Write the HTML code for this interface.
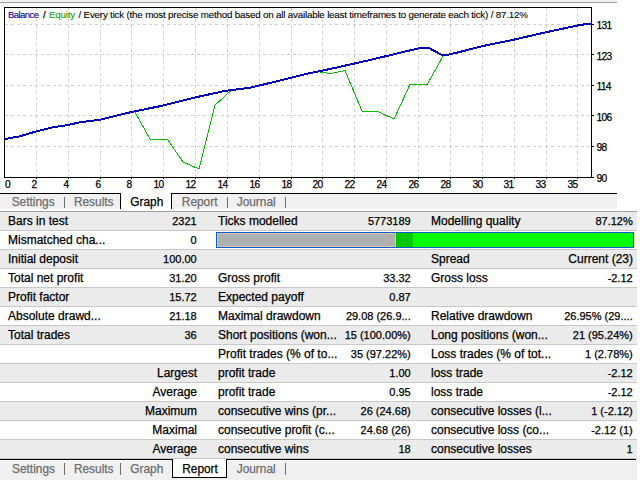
<!DOCTYPE html>
<html><head><meta charset="utf-8"><style>
html,body{margin:0;padding:0;}
body{width:640px;height:480px;position:relative;overflow:hidden;background:#fff;font-family:"Liberation Sans", sans-serif;}
div{position:absolute;}
.t{position:absolute;white-space:nowrap;line-height:1;font-family:"Liberation Sans", sans-serif;-webkit-text-stroke:0.25px currentColor;}
</style></head><body>
<div style="left:0px;top:0px;width:617px;height:2px;background:#f0f0f0;"></div>
<div style="left:0px;top:2px;width:617px;height:1px;background:#a0a0a0;"></div>
<svg width="640" height="200" style="position:absolute;left:0;top:0" shape-rendering="crispEdges"><line x1="36.5" y1="7" x2="36.5" y2="177" stroke="#d0d0d0" stroke-dasharray="3 3"/><line x1="36.5" y1="177" x2="36.5" y2="178.6" stroke="#000"/><line x1="68.5" y1="7" x2="68.5" y2="177" stroke="#d0d0d0" stroke-dasharray="3 3"/><line x1="68.5" y1="177" x2="68.5" y2="178.6" stroke="#000"/><line x1="100.5" y1="7" x2="100.5" y2="177" stroke="#d0d0d0" stroke-dasharray="3 3"/><line x1="100.5" y1="177" x2="100.5" y2="178.6" stroke="#000"/><line x1="131.5" y1="7" x2="131.5" y2="177" stroke="#d0d0d0" stroke-dasharray="3 3"/><line x1="131.5" y1="177" x2="131.5" y2="178.6" stroke="#000"/><line x1="163.5" y1="7" x2="163.5" y2="177" stroke="#d0d0d0" stroke-dasharray="3 3"/><line x1="163.5" y1="177" x2="163.5" y2="178.6" stroke="#000"/><line x1="195.5" y1="7" x2="195.5" y2="177" stroke="#d0d0d0" stroke-dasharray="3 3"/><line x1="195.5" y1="177" x2="195.5" y2="178.6" stroke="#000"/><line x1="227.5" y1="7" x2="227.5" y2="177" stroke="#d0d0d0" stroke-dasharray="3 3"/><line x1="227.5" y1="177" x2="227.5" y2="178.6" stroke="#000"/><line x1="259.5" y1="7" x2="259.5" y2="177" stroke="#d0d0d0" stroke-dasharray="3 3"/><line x1="259.5" y1="177" x2="259.5" y2="178.6" stroke="#000"/><line x1="291.5" y1="7" x2="291.5" y2="177" stroke="#d0d0d0" stroke-dasharray="3 3"/><line x1="291.5" y1="177" x2="291.5" y2="178.6" stroke="#000"/><line x1="322.5" y1="7" x2="322.5" y2="177" stroke="#d0d0d0" stroke-dasharray="3 3"/><line x1="322.5" y1="177" x2="322.5" y2="178.6" stroke="#000"/><line x1="354.5" y1="7" x2="354.5" y2="177" stroke="#d0d0d0" stroke-dasharray="3 3"/><line x1="354.5" y1="177" x2="354.5" y2="178.6" stroke="#000"/><line x1="386.5" y1="7" x2="386.5" y2="177" stroke="#d0d0d0" stroke-dasharray="3 3"/><line x1="386.5" y1="177" x2="386.5" y2="178.6" stroke="#000"/><line x1="418.5" y1="7" x2="418.5" y2="177" stroke="#d0d0d0" stroke-dasharray="3 3"/><line x1="418.5" y1="177" x2="418.5" y2="178.6" stroke="#000"/><line x1="450.5" y1="7" x2="450.5" y2="177" stroke="#d0d0d0" stroke-dasharray="3 3"/><line x1="450.5" y1="177" x2="450.5" y2="178.6" stroke="#000"/><line x1="482.5" y1="7" x2="482.5" y2="177" stroke="#d0d0d0" stroke-dasharray="3 3"/><line x1="482.5" y1="177" x2="482.5" y2="178.6" stroke="#000"/><line x1="514.5" y1="7" x2="514.5" y2="177" stroke="#d0d0d0" stroke-dasharray="3 3"/><line x1="514.5" y1="177" x2="514.5" y2="178.6" stroke="#000"/><line x1="546.5" y1="7" x2="546.5" y2="177" stroke="#d0d0d0" stroke-dasharray="3 3"/><line x1="546.5" y1="177" x2="546.5" y2="178.6" stroke="#000"/><line x1="577.5" y1="7" x2="577.5" y2="177" stroke="#d0d0d0" stroke-dasharray="3 3"/><line x1="577.5" y1="177" x2="577.5" y2="178.6" stroke="#000"/><line x1="5" y1="24.5" x2="591" y2="24.5" stroke="#d0d0d0" stroke-dasharray="3 3"/><line x1="591" y1="24.5" x2="594" y2="24.5" stroke="#000"/><line x1="5" y1="54.5" x2="591" y2="54.5" stroke="#d0d0d0" stroke-dasharray="3 3"/><line x1="591" y1="54.5" x2="594" y2="54.5" stroke="#000"/><line x1="5" y1="85.5" x2="591" y2="85.5" stroke="#d0d0d0" stroke-dasharray="3 3"/><line x1="591" y1="85.5" x2="594" y2="85.5" stroke="#000"/><line x1="5" y1="115.5" x2="591" y2="115.5" stroke="#d0d0d0" stroke-dasharray="3 3"/><line x1="591" y1="115.5" x2="594" y2="115.5" stroke="#000"/><line x1="5" y1="146.5" x2="591" y2="146.5" stroke="#d0d0d0" stroke-dasharray="3 3"/><line x1="591" y1="146.5" x2="594" y2="146.5" stroke="#000"/><line x1="591" y1="177.5" x2="594" y2="177.5" stroke="#000"/><rect x="4.5" y="7.5" width="587" height="170" fill="none" stroke="#000"/><polyline fill="none" stroke="#00c000" stroke-width="1" points="135,112 150,139 168,140 183,162 199,169 215,105 224,97 231,90.5"/><polyline fill="none" stroke="#00c000" stroke-width="1" points="320,72 331,73.5 345,70.5 362,111 379,112 394,119 410,84.5 427,85 443,56"/><polyline fill="none" stroke="#0000b8" stroke-width="2" points="5,139 20,136.25 36,131.5 52,127.5 68,125 80,122.25 100,119.7 120,114.75 135,111.25 163,105.6 195,97.5 225,90.9 232,90 250,87.75 290,78.1 310,73.1 330,69 370,60 422,47.5 428,47.5 442,55 447,55 460,51.9 482,46.25 515,39.4 545,32.5 577,25.6 588,23.75 591,23.75"/></svg>
<span class="t" style="left:8px;top:10.3px;font-size:9.5px;color:#0000a0;letter-spacing:-0.55px;-webkit-text-stroke:0.1px currentColor;">Balance</span>
<span class="t" style="left:43px;top:10px;font-size:9.8px;color:#000;">/</span>
<span class="t" style="left:49px;top:10px;font-size:9.8px;color:#10a010;letter-spacing:-0.2px;-webkit-text-stroke:0.1px currentColor;">Equity</span>
<span class="t" style="left:78.5px;top:10px;font-size:9.8px;color:#000;letter-spacing:-0.2px;-webkit-text-stroke:0.1px currentColor;">/ Every tick (the most precise method based on all available least timeframes to generate each tick) / 87.12%</span>
<span class="t" style="left:596.5px;top:21.1px;font-size:10.2px;color:#000;letter-spacing:-0.7px;">131</span>
<span class="t" style="left:596.5px;top:51.6px;font-size:10.2px;color:#000;letter-spacing:-0.7px;">123</span>
<span class="t" style="left:596.5px;top:82.1px;font-size:10.2px;color:#000;letter-spacing:-0.7px;">114</span>
<span class="t" style="left:596.5px;top:112.6px;font-size:10.2px;color:#000;letter-spacing:-0.7px;">106</span>
<span class="t" style="left:596.5px;top:143.1px;font-size:10.2px;color:#000;letter-spacing:-0.7px;">98</span>
<span class="t" style="left:596.5px;top:174.1px;font-size:10.2px;color:#000;letter-spacing:-0.7px;">90</span>
<span class="t" style="left:5px;top:179.6px;font-size:10.2px;color:#000;letter-spacing:-0.7px;">0</span>
<span class="t" style="right:603.5px;top:179.6px;font-size:10.2px;color:#000;letter-spacing:-0.7px;">2</span>
<span class="t" style="right:571.5px;top:179.6px;font-size:10.2px;color:#000;letter-spacing:-0.7px;">4</span>
<span class="t" style="right:539.5px;top:179.6px;font-size:10.2px;color:#000;letter-spacing:-0.7px;">6</span>
<span class="t" style="right:508.5px;top:179.6px;font-size:10.2px;color:#000;letter-spacing:-0.7px;">8</span>
<span class="t" style="right:476.5px;top:179.6px;font-size:10.2px;color:#000;letter-spacing:-0.7px;">10</span>
<span class="t" style="right:444.5px;top:179.6px;font-size:10.2px;color:#000;letter-spacing:-0.7px;">12</span>
<span class="t" style="right:412.5px;top:179.6px;font-size:10.2px;color:#000;letter-spacing:-0.7px;">14</span>
<span class="t" style="right:380.5px;top:179.6px;font-size:10.2px;color:#000;letter-spacing:-0.7px;">16</span>
<span class="t" style="right:348.5px;top:179.6px;font-size:10.2px;color:#000;letter-spacing:-0.7px;">18</span>
<span class="t" style="right:317.5px;top:179.6px;font-size:10.2px;color:#000;letter-spacing:-0.7px;">20</span>
<span class="t" style="right:285.5px;top:179.6px;font-size:10.2px;color:#000;letter-spacing:-0.7px;">22</span>
<span class="t" style="right:253.5px;top:179.6px;font-size:10.2px;color:#000;letter-spacing:-0.7px;">24</span>
<span class="t" style="right:221.5px;top:179.6px;font-size:10.2px;color:#000;letter-spacing:-0.7px;">26</span>
<span class="t" style="right:189.5px;top:179.6px;font-size:10.2px;color:#000;letter-spacing:-0.7px;">28</span>
<span class="t" style="right:157.5px;top:179.6px;font-size:10.2px;color:#000;letter-spacing:-0.7px;">30</span>
<span class="t" style="right:126.5px;top:179.6px;font-size:10.2px;color:#000;letter-spacing:-0.7px;">31</span>
<span class="t" style="right:94.5px;top:179.6px;font-size:10.2px;color:#000;letter-spacing:-0.7px;">33</span>
<span class="t" style="right:62.5px;top:179.6px;font-size:10.2px;color:#000;letter-spacing:-0.7px;">35</span>
<div style="left:0px;top:193px;width:617px;height:1px;background:#000;"></div>
<div style="left:0px;top:194px;width:617px;height:15px;background:#f0f0f0;"></div>
<div style="left:0px;top:209px;width:637px;height:2px;background:#ffffff;"></div>
<div style="left:0px;top:211px;width:637px;height:1px;background:#a0a0a0;"></div>
<div style="left:120px;top:193px;width:52px;height:16px;background:#fff;border-left:1px solid #000;border-right:1px solid #000;box-sizing:border-box;"></div>
<span class="t" style="left:11.7px;top:196.5px;font-size:11.9px;color:#6d6d6d;">Settings</span>
<span class="t" style="left:73.9px;top:196.5px;font-size:11.9px;color:#6d6d6d;">Results</span>
<span class="t" style="left:130.3px;top:196.5px;font-size:11.9px;color:#000;">Graph</span>
<span class="t" style="left:181.8px;top:196.5px;font-size:11.9px;color:#6d6d6d;">Report</span>
<span class="t" style="left:236.7px;top:196.5px;font-size:11.9px;color:#6d6d6d;">Journal</span>
<div style="left:64px;top:197px;width:1px;height:11px;background:#6d6d6d;"></div>
<div style="left:227px;top:197px;width:1px;height:11px;background:#6d6d6d;"></div>
<div style="left:285px;top:197px;width:1px;height:11px;background:#6d6d6d;"></div>
<div style="left:0px;top:212px;width:637px;height:18px;background:#ebebeb;"></div>
<div style="left:0px;top:230px;width:637px;height:1px;background:#c8c8c8;"></div>
<span class="t" style="left:8px;top:215px;font-size:12px;color:#000;">Bars in test</span>
<span class="t" style="right:443.3px;top:216px;font-size:11px;color:#000;">2321</span>
<span class="t" style="left:218px;top:215px;font-size:12px;color:#000;">Ticks modelled</span>
<span class="t" style="right:229.3px;top:216px;font-size:11px;color:#000;">5773189</span>
<span class="t" style="left:431px;top:215px;font-size:12px;color:#000;">Modelling quality</span>
<span class="t" style="right:7.2999999999999545px;top:216px;font-size:11px;color:#000;">87.12%</span>
<div style="left:0px;top:231px;width:637px;height:18px;background:#fff;"></div>
<div style="left:0px;top:249px;width:637px;height:1px;background:#c8c8c8;"></div>
<span class="t" style="left:8px;top:234px;font-size:12px;color:#000;">Mismatched cha...</span>
<span class="t" style="right:443.3px;top:235px;font-size:11px;color:#000;">0</span>
<div style="left:0px;top:250px;width:637px;height:18px;background:#ebebeb;"></div>
<div style="left:0px;top:268px;width:637px;height:1px;background:#c8c8c8;"></div>
<span class="t" style="left:8px;top:253px;font-size:12px;color:#000;">Initial deposit</span>
<span class="t" style="right:443.3px;top:254px;font-size:11px;color:#000;">100.00</span>
<span class="t" style="left:431px;top:253px;font-size:12px;color:#000;">Spread</span>
<span class="t" style="right:7px;top:253px;font-size:12px;color:#000;">Current (23)</span>
<div style="left:0px;top:269px;width:637px;height:18px;background:#fff;"></div>
<div style="left:0px;top:287px;width:637px;height:1px;background:#c8c8c8;"></div>
<span class="t" style="left:8px;top:272px;font-size:12px;color:#000;">Total net profit</span>
<span class="t" style="right:443.3px;top:273px;font-size:11px;color:#000;">31.20</span>
<span class="t" style="left:218px;top:272px;font-size:12px;color:#000;">Gross profit</span>
<span class="t" style="right:229.3px;top:273px;font-size:11px;color:#000;">33.32</span>
<span class="t" style="left:431px;top:272px;font-size:12px;color:#000;">Gross loss</span>
<span class="t" style="right:7.2999999999999545px;top:273px;font-size:11px;color:#000;">-2.12</span>
<div style="left:0px;top:288px;width:637px;height:18px;background:#ebebeb;"></div>
<div style="left:0px;top:306px;width:637px;height:1px;background:#c8c8c8;"></div>
<span class="t" style="left:8px;top:291px;font-size:12px;color:#000;">Profit factor</span>
<span class="t" style="right:443.3px;top:292px;font-size:11px;color:#000;">15.72</span>
<span class="t" style="left:218px;top:291px;font-size:12px;color:#000;">Expected payoff</span>
<span class="t" style="right:229.3px;top:292px;font-size:11px;color:#000;">0.87</span>
<div style="left:0px;top:307px;width:637px;height:18px;background:#fff;"></div>
<div style="left:0px;top:325px;width:637px;height:1px;background:#c8c8c8;"></div>
<span class="t" style="left:8px;top:310px;font-size:12px;color:#000;">Absolute drawd...</span>
<span class="t" style="right:443.3px;top:311px;font-size:11px;color:#000;">21.18</span>
<span class="t" style="left:218px;top:310px;font-size:12px;color:#000;">Maximal drawdown</span>
<span class="t" style="right:229.3px;top:311px;font-size:11px;color:#000;">29.08 (26.9...</span>
<span class="t" style="left:431px;top:310px;font-size:12px;color:#000;">Relative drawdown</span>
<span class="t" style="right:7.2999999999999545px;top:311px;font-size:11px;color:#000;">26.95% (29....</span>
<div style="left:0px;top:326px;width:637px;height:18px;background:#ebebeb;"></div>
<div style="left:0px;top:344px;width:637px;height:1px;background:#c8c8c8;"></div>
<span class="t" style="left:8px;top:329px;font-size:12px;color:#000;">Total trades</span>
<span class="t" style="right:443.3px;top:330px;font-size:11px;color:#000;">36</span>
<span class="t" style="left:218px;top:329px;font-size:12px;color:#000;">Short positions (won...</span>
<span class="t" style="right:229.3px;top:330px;font-size:11px;color:#000;">15 (100.00%)</span>
<span class="t" style="left:431px;top:329px;font-size:12px;color:#000;">Long positions (won...</span>
<span class="t" style="right:7.2999999999999545px;top:330px;font-size:11px;color:#000;">21 (95.24%)</span>
<div style="left:0px;top:345px;width:637px;height:18px;background:#fff;"></div>
<div style="left:0px;top:363px;width:637px;height:1px;background:#c8c8c8;"></div>
<span class="t" style="left:218px;top:348px;font-size:12px;color:#000;">Profit trades (% of to...</span>
<span class="t" style="right:229.3px;top:349px;font-size:11px;color:#000;">35 (97.22%)</span>
<span class="t" style="left:431px;top:348px;font-size:12px;color:#000;">Loss trades (% of tot...</span>
<span class="t" style="right:7.2999999999999545px;top:349px;font-size:11px;color:#000;">1 (2.78%)</span>
<div style="left:0px;top:364px;width:637px;height:18px;background:#ebebeb;"></div>
<div style="left:0px;top:382px;width:637px;height:1px;background:#c8c8c8;"></div>
<span class="t" style="right:443px;top:367px;font-size:12px;color:#000;">Largest</span>
<span class="t" style="left:218px;top:367px;font-size:12px;color:#000;">profit trade</span>
<span class="t" style="right:229.3px;top:368px;font-size:11px;color:#000;">1.00</span>
<span class="t" style="left:431px;top:367px;font-size:12px;color:#000;">loss trade</span>
<span class="t" style="right:7.2999999999999545px;top:368px;font-size:11px;color:#000;">-2.12</span>
<div style="left:0px;top:383px;width:637px;height:18px;background:#fff;"></div>
<div style="left:0px;top:401px;width:637px;height:1px;background:#c8c8c8;"></div>
<span class="t" style="right:443px;top:386px;font-size:12px;color:#000;">Average</span>
<span class="t" style="left:218px;top:386px;font-size:12px;color:#000;">profit trade</span>
<span class="t" style="right:229.3px;top:387px;font-size:11px;color:#000;">0.95</span>
<span class="t" style="left:431px;top:386px;font-size:12px;color:#000;">loss trade</span>
<span class="t" style="right:7.2999999999999545px;top:387px;font-size:11px;color:#000;">-2.12</span>
<div style="left:0px;top:402px;width:637px;height:18px;background:#ebebeb;"></div>
<div style="left:0px;top:420px;width:637px;height:1px;background:#c8c8c8;"></div>
<span class="t" style="right:443px;top:405px;font-size:12px;color:#000;">Maximum</span>
<span class="t" style="left:218px;top:405px;font-size:12px;color:#000;">consecutive wins (pr...</span>
<span class="t" style="right:229.3px;top:406px;font-size:11px;color:#000;">26 (24.68)</span>
<span class="t" style="left:431px;top:405px;font-size:12px;color:#000;">consecutive losses (l...</span>
<span class="t" style="right:7.2999999999999545px;top:406px;font-size:11px;color:#000;">1 (-2.12)</span>
<div style="left:0px;top:421px;width:637px;height:18px;background:#fff;"></div>
<div style="left:0px;top:439px;width:637px;height:1px;background:#c8c8c8;"></div>
<span class="t" style="right:443px;top:424px;font-size:12px;color:#000;">Maximal</span>
<span class="t" style="left:218px;top:424px;font-size:12px;color:#000;">consecutive profit (c...</span>
<span class="t" style="right:229.3px;top:425px;font-size:11px;color:#000;">24.68 (26)</span>
<span class="t" style="left:431px;top:424px;font-size:12px;color:#000;">consecutive loss (co...</span>
<span class="t" style="right:7.2999999999999545px;top:425px;font-size:11px;color:#000;">-2.12 (1)</span>
<div style="left:0px;top:440px;width:637px;height:18px;background:#ebebeb;"></div>
<div style="left:0px;top:458px;width:637px;height:1px;background:#c8c8c8;"></div>
<span class="t" style="right:443px;top:443px;font-size:12px;color:#000;">Average</span>
<span class="t" style="left:218px;top:443px;font-size:12px;color:#000;">consecutive wins</span>
<span class="t" style="right:229.3px;top:444px;font-size:11px;color:#000;">18</span>
<span class="t" style="left:431px;top:443px;font-size:12px;color:#000;">consecutive losses</span>
<span class="t" style="right:7.2999999999999545px;top:444px;font-size:11px;color:#000;">1</span>
<div style="left:216px;top:232px;width:418px;height:16px;background:#b0b0b0;border:1px solid #0060d0;box-sizing:border-box;"></div>
<div style="left:217px;top:233px;width:179px;height:14px;background:#b0b0b0;border:1px solid #e4c4a8;box-sizing:border-box;"></div>
<div style="left:396px;top:233px;width:17px;height:14px;background:#00c800;"></div>
<div style="left:413px;top:233px;width:220px;height:14px;background:#00ff00;"></div>
<div style="left:0px;top:459px;width:636px;height:1px;background:#000;"></div>
<div style="left:0px;top:460px;width:637px;height:1px;background:#fff;"></div>
<div style="left:0px;top:461px;width:637px;height:19px;background:#f0f0f0;"></div>
<div style="left:172px;top:459px;width:55px;height:19px;background:#fff;border-left:1px solid #000;border-right:1px solid #000;border-bottom:1px solid #000;box-sizing:border-box;"></div>
<span class="t" style="left:12.0px;top:463.5px;font-size:11.9px;color:#6d6d6d;">Settings</span>
<span class="t" style="left:73.9px;top:463.5px;font-size:11.9px;color:#6d6d6d;">Results</span>
<span class="t" style="left:130.3px;top:463.5px;font-size:11.9px;color:#6d6d6d;">Graph</span>
<span class="t" style="left:182.2px;top:463.5px;font-size:11.9px;color:#000;">Report</span>
<span class="t" style="left:236.7px;top:463.5px;font-size:11.9px;color:#6d6d6d;">Journal</span>
<div style="left:64px;top:463px;width:1px;height:12px;background:#6d6d6d;"></div>
<div style="left:120px;top:463px;width:1px;height:12px;background:#6d6d6d;"></div>
<div style="left:285px;top:463px;width:1px;height:12px;background:#6d6d6d;"></div>
</body></html>
